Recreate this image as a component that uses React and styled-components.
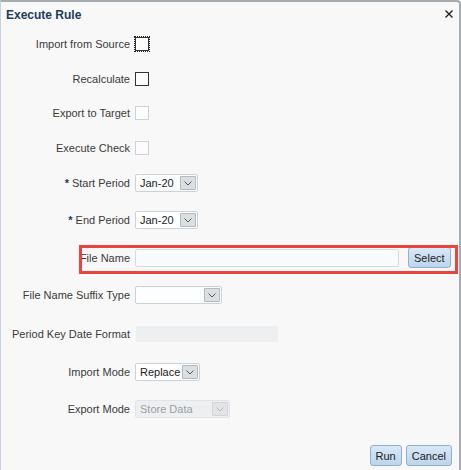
import React from 'react';
import styled, { createGlobalStyle } from 'styled-components';

const GlobalStyle = createGlobalStyle`
  html, body { margin: 0; padding: 0; background: #fff; }
  body {
    font-family: "Liberation Sans", Arial, sans-serif;
    font-size: 11px;
    color: #333;
  }
`;

// row heights are taken from the dialog so each control lines up
const rows = [
  { label: 'Import from Source', kind: 'check', focused: true, h: 34 },
  { label: 'Recalculate', kind: 'check', h: 35 },
  { label: 'Export to Target', kind: 'check', disabled: true, h: 34 },
  { label: 'Execute Check', kind: 'check', disabled: true, h: 35 },
  { label: 'Start Period', required: true, kind: 'select', value: 'Jan-20', width: 63, h: 36 },
  { label: 'End Period', required: true, kind: 'select', value: 'Jan-20', width: 63, h: 38 },
  { label: 'File Name', kind: 'file', h: 37 },
  { label: 'File Name Suffix Type', kind: 'select', value: '', width: 87, h: 38 },
  { label: 'Period Key Date Format', kind: 'readonly', h: 39 },
  { label: 'Import Mode', kind: 'select', value: 'Replace', width: 65, h: 37 },
  { label: 'Export Mode', kind: 'select', value: 'Store Data', width: 95, disabled: true, h: 38 },
];

const Chevron = ({ color }) => (
  <svg width="8" height="5" viewBox="0 0 8 5">
    <path d="M0.5 0.5 L4 4 L7.5 0.5" fill="none" stroke={color} strokeWidth="1" />
  </svg>
);

const CloseIcon = () => (
  <svg width="8" height="8" viewBox="0 0 8 8">
    <path d="M0.5 0.5 L7.5 7.5 M7.5 0.5 L0.5 7.5" stroke="#222" strokeWidth="1.4" />
  </svg>
);

const Field = ({ row }) => {
  if (row.kind === 'check') {
    return <Checkbox $focused={row.focused} $disabled={row.disabled} />;
  }
  if (row.kind === 'select') {
    return (
      <Select $width={row.width} $disabled={row.disabled}>
        <SelectValue>{row.value}</SelectValue>
        <ArrowBox $disabled={row.disabled}>
          <Chevron color={row.disabled ? '#b5b8bb' : '#555'} />
        </ArrowBox>
      </Select>
    );
  }
  if (row.kind === 'file') {
    return (
      <FileGroup>
        <TextInput />
        <BlueButton>Select</BlueButton>
      </FileGroup>
    );
  }
  return <ReadOnlyBox />;
};

const App = () => {
  return (
    <>
      <GlobalStyle />
      <Dialog>
        <Header>
          <Title>Execute Rule</Title>
          <CloseButton><CloseIcon /></CloseButton>
        </Header>

        <Form>
          {rows.map(row => (
            <Row key={row.label} $h={row.h} $highlight={row.kind === 'file'}>
              <Label>
                {row.required && <Star>*</Star>}
                {row.label}
              </Label>
              <Field row={row} />
            </Row>
          ))}
        </Form>

        <Footer>
          <BlueButton>Run</BlueButton>
          <BlueButton>Cancel</BlueButton>
        </Footer>
      </Dialog>
    </>
  );
};

export default App;

const Dialog = styled.div`
  box-sizing: border-box;
  width: 461px;
  height: 470px;
  display: flex;
  flex-direction: column;
  background: #f8f8f8;
  border-top: 2px solid #a7acb1;
  border-right: 2px solid #a7acb1;
  border-left: 1px solid #c4d1de;
  border-top-right-radius: 4px;
`;

const Header = styled.div`
  height: 25px;
  display: flex;
  align-items: center;
  justify-content: space-between;
  padding: 0 6px 0 5px;
`;

const Title = styled.h1`
  margin: 0;
  font-size: 12px;
  font-weight: bold;
  color: #1b3c5c;
`;

const CloseButton = styled.span`
  display: flex;
  margin-top: -2px;
`;

const Form = styled.div`
  display: flex;
  flex-direction: column;
`;

const Row = styled.div`
  position: relative;
  height: ${({ $h }) => $h}px;
  display: grid;
  grid-template-columns: 129px 1fr;
  column-gap: 5px;
  align-items: center;

  ${({ $highlight }) => $highlight && `
    &::after {
      content: "";
      position: absolute;
      left: 78px;
      right: 1px;
      top: 6px;
      height: 23px;
      border: 3px solid #e8453f;
      pointer-events: none;
    }
  `}
`;

const Label = styled.label`
  text-align: right;
  white-space: nowrap;
  color: #3a3a3a;
`;

const Star = styled.span`
  color: #1b3c5c;
  margin-right: 3px;
  font-weight: bold;
`;

const Checkbox = styled.span`
  box-sizing: border-box;
  width: 14px;
  height: 14px;
  background: #fcfcfc;
  border: 1px solid ${({ $disabled }) => ($disabled ? '#cfd2d5' : '#333')};
  ${({ $focused }) => $focused && `
    border: 1px solid #333;
    outline: 1px dotted #222;
    outline-offset: 0;
    box-shadow: inset 0 0 0 1px #fff;
  `}
`;

const Select = styled.div`
  box-sizing: border-box;
  width: ${({ $width }) => $width}px;
  height: 18px;
  display: flex;
  align-items: center;
  justify-content: space-between;
  padding: 0 1px 0 4px;
  border: 1px solid ${({ $disabled }) => ($disabled ? '#e3e4e6' : '#cdd2d7')};
  border-radius: 2px;
  background: ${({ $disabled }) => ($disabled ? '#eeeff1' : '#fdfeff')};
  color: ${({ $disabled }) => ($disabled ? '#9a9ea3' : '#222')};
`;

const SelectValue = styled.span`
  white-space: nowrap;
  font-size: 11px;
`;

const ArrowBox = styled.span`
  box-sizing: border-box;
  width: 16px;
  height: 14px;
  display: flex;
  align-items: center;
  justify-content: center;
  padding-top: 1px;
  background: ${({ $disabled }) => ($disabled ? '#e2e4e6' : '#dcdfe2')};
  border: 1px solid ${({ $disabled }) => ($disabled ? '#d3d6d9' : '#b4b9be')};
  border-radius: 1px;
`;

const FileGroup = styled.div`
  display: flex;
  align-items: center;
  gap: 9px;
`;

const TextInput = styled.span`
  box-sizing: border-box;
  width: 264px;
  height: 18px;
  border: 1px solid #d4dadf;
  border-radius: 2px;
  background: #f8fbfd;
`;

const ReadOnlyBox = styled.span`
  width: 142px;
  height: 16px;
  margin-left: 1px;
  background: #eeeff1;
`;

const BlueButton = styled.button`
  box-sizing: border-box;
  height: 21px;
  padding: 0 5px;
  font-family: "Liberation Sans", Arial, sans-serif;
  font-size: 11px;
  color: #222;
  background: linear-gradient(#d9e8f6, #bcd5ed);
  border: 1px solid #8eb0d1;
  border-radius: 3px;
  cursor: pointer;
`;

const Footer = styled.div`
  margin-top: auto;
  display: flex;
  justify-content: flex-end;
  gap: 4px;
  padding: 0 7px 4px 0;
`;
